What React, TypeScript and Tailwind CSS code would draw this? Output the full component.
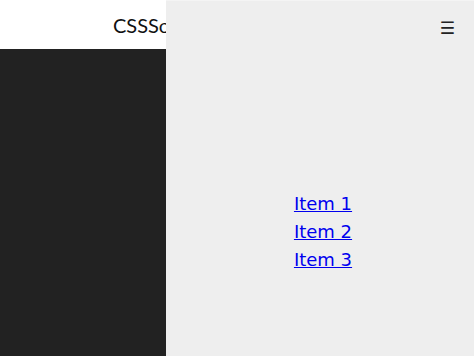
export default function App() {
  return (
    <div className="relative h-[356px] w-[474px] overflow-hidden bg-[#222]">
      <header className="flex h-[49px] items-center bg-white pl-[113px] font-['Lato',sans-serif] text-[20px] text-[#111]">
        CSSScript
      </header>
      <div className="absolute right-0 top-0 flex h-[356px] w-[308px] flex-col bg-[#eeeeee] border-t border-[#f4f4f4]">
        <div className="flex justify-end pr-[19px] pt-[15px] font-['DejaVu_Sans',sans-serif] text-[17px] text-[#222]">
          ☰
        </div>
        <ul className="mt-[152px] flex flex-col items-center gap-[8px] pl-[6px] font-['DejaVu_Sans',sans-serif] text-[18px] leading-[20px]">
          <li><a href="#" className="text-[#0000ee] underline">Item 1</a></li>
          <li><a href="#" className="text-[#0000ee] underline">Item 2</a></li>
          <li><a href="#" className="text-[#0000ee] underline">Item 3</a></li>
        </ul>
      </div>
    </div>
  );
}
